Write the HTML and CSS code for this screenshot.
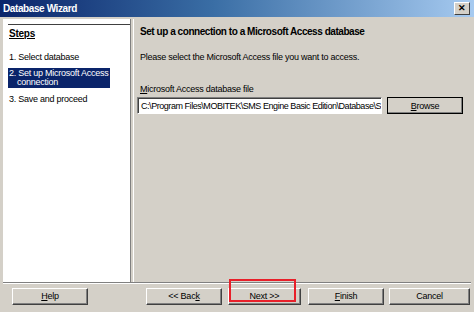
FILE: index.html
```html
<!DOCTYPE html>
<html>
<head>
    <meta charset="UTF-8">
    <title>Database Wizard</title>
    <link rel="stylesheet" href="styles.css">
</head>
<body>
    <div class="window">
        <div class="titlebar">
            <span class="title">Database Wizard</span>
            <span class="close">&#x2715;</span>
        </div>

        <div class="main">
            <div class="steps">
                <div class="steps-head">Steps</div>
                <div class="step">1. Select database</div>
                <div class="step current">2. Set up Microsoft Access<br><span class="indent">connection</span></div>
                <div class="step">3. Save and proceed</div>
            </div>

            <div class="content">
                <div class="heading">Set up a connection to a Microsoft Access database</div>
                <div class="desc">Please select the Microsoft Access file you want to access.</div>
                <div class="label"><u>M</u>icrosoft Access database file</div>
                <div class="file-row">
                    <div class="file-input">C:\Program Files\MOBITEK\SMS Engine Basic Edition\Database\S</div>
                    <button class="btn browse"><u>B</u>rowse</button>
                </div>
            </div>
        </div>

        <div class="footer">
            <button class="btn help"><u>H</u>elp</button>
            <div class="spacer"></div>
            <button class="btn back">&lt;&lt; Bac<u>k</u></button>
            <button class="btn next"><u>N</u>ext &gt;&gt;</button>
            <button class="btn finish"><u>F</u>inish</button>
            <button class="btn cancel">Cancel</button>
        </div>

        <!-- red annotation box drawn over the Next button -->
        <div class="callout"></div>
    </div>
</body>
</html>
```

FILE: styles.css
```css
body {
    margin: 0;
    padding: 0;
    font-family: "Liberation Sans", Arial, sans-serif;
    font-size: 9px;
    letter-spacing: -0.25px;
    color: #000;
    background: #d4d0c8;
}

.window {
    position: relative;
    width: 474px;
    height: 312px;
    box-sizing: border-box;
    background: #d4d0c8;
    border-left: 3px solid #d4d0c8;
    border-right: 3px solid #d4d0c8;
    display: flex;
    flex-direction: column;
}

.titlebar {
    height: 17px;
    margin: 0 -3px;
    padding: 0 4px 0 3px;
    display: flex;
    align-items: center;
    justify-content: space-between;
    background: linear-gradient(to right, #0a246a 0%, #3a6ea5 45%, #a6caf0 100%);
}

.title {
    color: #fff;
    font-weight: bold;
    font-size: 10px;
    letter-spacing: -0.4px;
}

.close {
    width: 16px;
    height: 13px;
    box-sizing: border-box;
    background: #d4d0c8;
    border: 1px solid;
    border-color: #fff #404040 #404040 #fff;
    font-size: 9px;
    font-weight: bold;
    line-height: 11px;
    text-align: center;
    letter-spacing: 0;
    color: #000;
}

.main {
    display: flex;
    height: 263px;
    margin-top: 2px;
}

.steps {
    width: 128px;
    background: #fff;
    border-right: 1px solid #808080;
    padding: 5px 0 0 5px;
    box-sizing: border-box;
}

.steps-head {
    border-top: 1px solid #404040;
    padding: 3px 0 0 1px;
    font-weight: bold;
    font-size: 10px;
    line-height: 12px;
    text-decoration: underline;
    margin-bottom: 10px;
}

.step {
    padding: 2px 1px;
    width: 102px;
    line-height: 10px;
    margin-bottom: 4px;
    box-sizing: border-box;
}

.step.current {
    background: #0a246a;
    color: #fff;
    padding: 1px 1px;
    line-height: 9px;
}

.indent {
    padding-left: 8px;
}

.content {
    flex: 1;
    border-left: 1px solid #fff;
    margin-left: 2px;
    padding: 7px 0 0 6px;
}

.heading {
    font-weight: bold;
    font-size: 10px;
    line-height: 12px;
    letter-spacing: -0.45px;
    margin-bottom: 14px;
}

.desc {
    line-height: 11px;
    margin-bottom: 21px;
}

.label {
    line-height: 11px;
    margin-bottom: 2px;
}

.file-row {
    display: flex;
    align-items: center;
    margin-left: -3px;
}

.file-input {
    width: 245px;
    height: 17px;
    box-sizing: border-box;
    background: #fff;
    border: 1px solid;
    border-color: #808080 #fff #fff #808080;
    box-shadow: inset 1px 1px #404040;
    padding: 3px 0 0 3px;
    letter-spacing: -0.45px;
    white-space: nowrap;
    overflow: hidden;
}

.btn {
    height: 17px;
    box-sizing: border-box;
    background: #d4d0c8;
    border: 1px solid;
    border-color: #fff #404040 #404040 #fff;
    box-shadow: inset -1px -1px #808080;
    font-family: inherit;
    font-size: 9px;
    letter-spacing: -0.25px;
    padding: 0;
    color: #000;
}

.browse {
    width: 76px;
    margin-left: 5px;
    outline: 1px solid #000;
    outline-offset: -1px;
}

.footer {
    flex: 1;
    border-top: 1px solid #808080;
    box-shadow: inset 0 1px #fff;
    display: flex;
    align-items: center;
    padding: 0 0 3px 9px;
}

.spacer {
    flex: 1;
}

.help {
    width: 76px;
}

.back {
    width: 76px;
    margin-right: 6px;
}

.next {
    width: 73px;
    margin-right: 7px;
}

.finish {
    width: 76px;
    margin-right: 5px;
}

.cancel {
    width: 81px;
    margin-right: 1px;
}

.callout {
    position: absolute;
    left: 226px;
    top: 279px;
    width: 67px;
    height: 23px;
    border: 2px solid #e8202a;
    box-sizing: border-box;
}
```
